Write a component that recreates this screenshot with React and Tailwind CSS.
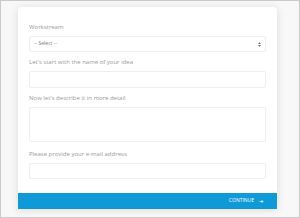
export default function App() {
  return (
    <div
      className="w-[300px] h-[218px] border border-[#c9c9c9] bg-[#f8f8f8] overflow-hidden"
      style={{ fontFamily: '"Open Sans", "DejaVu Sans", sans-serif' }}
    >
      <div className="ml-[17px] mt-[6px] w-[259px] h-[202px] bg-white rounded-t-[4px] shadow-[0_1px_8px_rgba(0,0,0,0.12)] flex flex-col">
        <div className="flex-1 px-[11px] pt-[16px]">
          {/* Workstream */}
          <p className="text-[6px] leading-[8px] text-[#9a9a9a]">Workstream</p>
          <div className="mt-[5px] h-[16px] border border-[#eeeeee] rounded-[2px] flex items-center justify-between px-[4px]">
            <span className="text-[5px] text-[#777]">-- Select --</span>
            <svg width="3" height="5" viewBox="0 0 4 6">
              <path d="M0 2.4 L2 0 L4 2.4 Z M0 3.6 L2 6 L4 3.6 Z" fill="#666" />
            </svg>
          </div>

          {/* Name */}
          <p className="mt-[6px] text-[6px] leading-[8px] text-[#9a9a9a]">Let's start with the name of your idea</p>
          <div className="mt-[5px] h-[17px] border border-[#eeeeee] rounded-[2px]" />

          {/* Detail */}
          <p className="mt-[6px] text-[6px] leading-[8px] text-[#9a9a9a]">Now let's describe it in more detail</p>
          <div className="mt-[5px] h-[35px] border border-[#eeeeee] rounded-[2px]" />

          {/* Email */}
          <p className="mt-[8px] text-[6px] leading-[8px] text-[#9a9a9a]">Please provide your e-mail address</p>
          <div className="mt-[5px] h-[16px] border border-[#eeeeee] rounded-[2px]" />
        </div>

        <div className="h-[16px] bg-[#0e9ad6] flex items-center justify-end pr-[13px] gap-[5px]">
          <span className="text-[5px] font-medium text-white">CONTINUE</span>
          <svg width="5" height="5" viewBox="0 0 10 10">
            <path d="M1 5 H8 M5 2 L8 5 L5 8" stroke="white" strokeWidth="1.4" fill="none" />
          </svg>
        </div>
      </div>
    </div>
  );
}
